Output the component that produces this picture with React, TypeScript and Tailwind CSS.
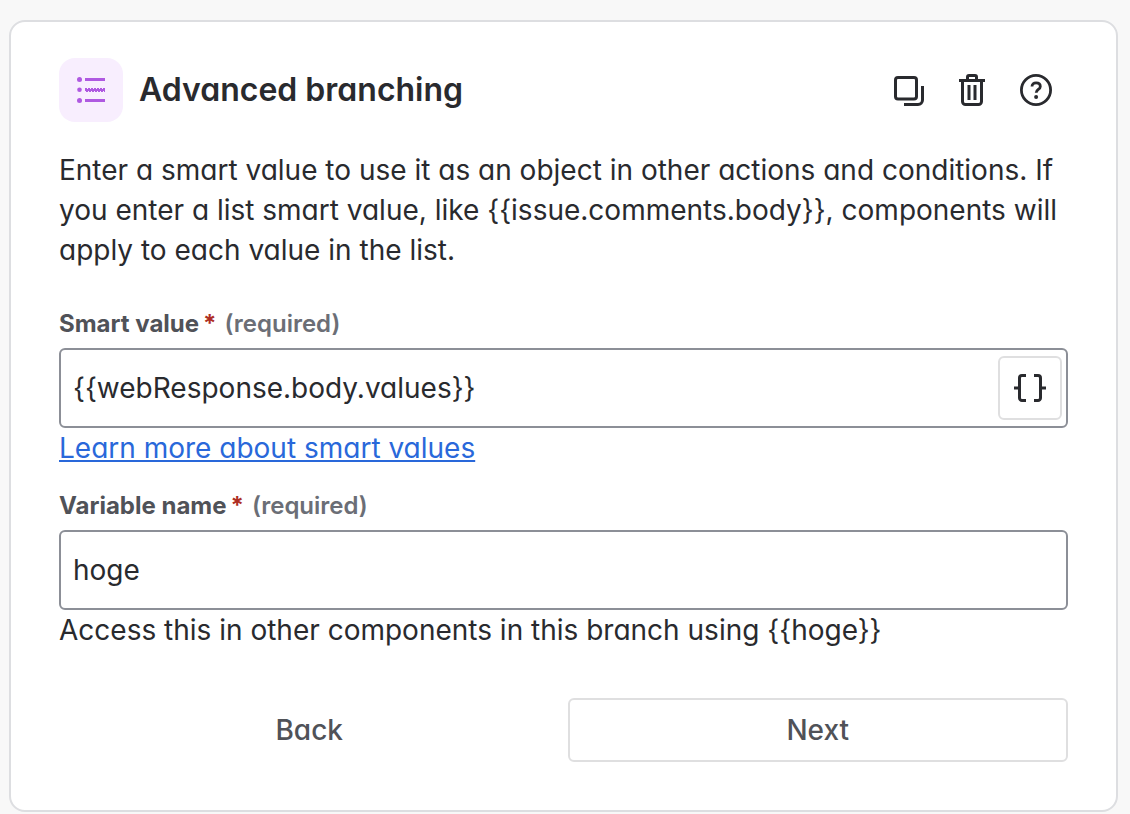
import { useState } from 'react';

const DESCRIPTION =
  'Enter a smart value to use it as an object in other actions and conditions. If you enter a list smart value, like {{issue.comments.body}}, components will apply to each value in the list.';

function ListIcon() {
  return (
    <svg width="32" height="32" viewBox="0 0 32 32" fill="#af59e1" aria-hidden="true">
      <circle cx="4.5" cy="5.5" r="2.5" />
      <circle cx="4.5" cy="15.8" r="2.3" />
      <circle cx="4.5" cy="26.5" r="2.5" />
      <path d="M10 4h20v3H10zM10 15h20v2H10zM10 25h20v3H10z" />
      <path d="M10 14.5h20M11 17.5h19" stroke="#af59e1" strokeWidth="1" strokeDasharray="2 1" />
    </svg>
  );
}

function CopyIcon() {
  return (
    <svg width="32" height="32" viewBox="0 0 32 32" fill="none" stroke="#292a2e" strokeWidth="3" aria-hidden="true">
      <rect x="3.5" y="3.5" width="21" height="21.500" rx="2.500" />
      <path d="M30.500 12v14a4.500 4.500 0 0 1-4.500 4.500H12" />
    </svg>
  );
}

function TrashIcon() {
  return (
    <svg width="32" height="32" viewBox="0 0 32 32" fill="none" stroke="#292a2e" strokeWidth="3" aria-hidden="true">
      <path d="M3 6.500h26" />
      <path d="M11.500 6.500V3a1.500 1.500 0 0 1 1.500-1.500h6A1.500 1.500 0 0 1 20.500 3v3.500" />
      <path d="M6.500 7v20.500a3 3 0 0 0 3 3h13a3 3 0 0 0 3-3V7" />
      <path d="M13 11v15M19 11v15" />
    </svg>
  );
}

function HelpIcon() {
  return (
    <svg width="32" height="32" viewBox="0 0 32 32" fill="none" stroke="#292a2e" strokeWidth="2.8" aria-hidden="true">
      <circle cx="16" cy="16" r="14.6" />
      <path d="M12 12.500c0-2.300 1.700-3.700 4.100-3.700 2.400 0 4.200 1.400 4.200 3.600 0 3.200-4.100 3-4.100 6.400" />
      <circle cx="16.100" cy="23" r="2" fill="#292a2e" stroke="none" />
    </svg>
  );
}

function BracesIcon() {
  return (
    <svg width="32" height="32" viewBox="0 0 32 32" fill="none" stroke="#292a2e" strokeWidth="3" aria-hidden="true">
      <path d="M12 3.500H8a2.500 2.500 0 0 0-2.500 2.500v20a2.500 2.500 0 0 0 2.500 2.500h4M20 3.500h4a2.500 2.500 0 0 1 2.500 2.500v20a2.500 2.500 0 0 1-2.500 2.500h-4M0 16h5M27 16h5" />
    </svg>
  );
}

function FieldLabel({ htmlFor, text }: { htmlFor: string; text: string }) {
  return (
    <label
      htmlFor={htmlFor}
      className="mb-2 block text-2xl font-bold text-[#505258] [font-feature-settings:normal]"
    >
      {text}
      <span className="ml-1 text-[#ae2e24]">*</span>
      <span className="ml-2 font-semibold text-[#6b6e76]">(required)</span>
    </label>
  );
}

export default function App() {
  const [smartValue, setSmartValue] = useState('{{webResponse.body.values}}');
  const [variable, setVariable] = useState('hoge');

  return (
    <div className="min-h-screen bg-[#f8f8f8] pt-5 pr-3 pl-[9px] font-['Inter','Liberation_Sans',sans-serif] text-[28px] leading-10 text-[#292a2e] [font-feature-settings:'cv11']">
      <main className="rounded-2xl border-2 border-[#dddee1] bg-white px-12 pt-9 pb-12">
        <header className="flex items-center gap-4">
          <div className="flex size-16 shrink-0 items-center justify-center rounded-2xl bg-[#f8eefe]">
            <ListIcon />
          </div>
          <h1 className="flex-1 text-[32px] font-semibold">Advanced branching</h1>
          <div className="flex">
            <button type="button" aria-label="Duplicate" className="flex size-16 items-center justify-center">
              <CopyIcon />
            </button>
            <button type="button" aria-label="Delete" className="flex size-16 items-center justify-center">
              <TrashIcon />
            </button>
            <button type="button" aria-label="Help" className="flex size-16 items-center justify-center">
              <HelpIcon />
            </button>
          </div>
        </header>

        <p className="mt-7">{DESCRIPTION}</p>

        <form onSubmit={(e) => e.preventDefault()}>
          <div className="mt-[38px]">
            <FieldLabel htmlFor="smart-value" text="Smart value" />
            <div className="flex h-20 items-center rounded-md border-2 border-[#8c8f97] pr-1">
              <input
                id="smart-value"
                required
                value={smartValue}
                onChange={(e) => setSmartValue(e.target.value)}
                className="h-full min-w-0 flex-1 bg-transparent px-3 outline-none"
              />
              <button
                type="button"
                aria-label="Insert smart value"
                className="flex size-16 items-center justify-center rounded-md border-2 border-[#dfdfe0]"
              >
                <BracesIcon />
              </button>
            </div>
            <a href="#smart-values" className="block w-fit text-[#2968da] underline">
              Learn more about smart values
            </a>
          </div>

          <div className="mt-[22px]">
            <FieldLabel htmlFor="variable-name" text="Variable name" />
            <input
              id="variable-name"
              required
              value={variable}
              onChange={(e) => setVariable(e.target.value)}
              className="block h-20 w-full rounded-md border-2 border-[#8c8f97] bg-transparent px-3 outline-none"
            />
            <p>{`Access this in other components in this branch using {{hoge}}`}</p>
          </div>

          <div className="mt-12 grid grid-cols-2 gap-2 font-medium text-[#505258]">
            <button type="button" className="h-16 rounded-md">
              Back
            </button>
            <button type="submit" className="h-16 rounded-md border-2 border-[#dfdfe0]">
              Next
            </button>
          </div>
        </form>
      </main>
    </div>
  );
}
